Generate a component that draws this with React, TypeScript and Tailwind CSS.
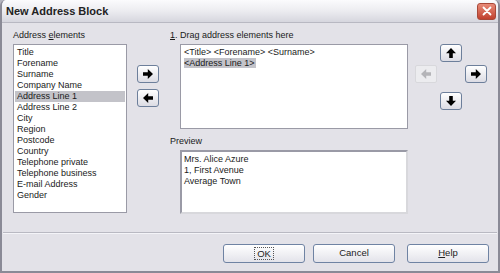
import React from "react";

const font = { fontFamily: '"Liberation Sans", Arial, sans-serif' };

const elements = [
  "Title",
  "Forename",
  "Surname",
  "Company Name",
  "Address Line 1",
  "Address Line 2",
  "City",
  "Region",
  "Postcode",
  "Country",
  "Telephone private",
  "Telephone business",
  "E-mail Address",
  "Gender",
];

type Dir = "up" | "down" | "left" | "right";

function Arrow({ dir, color = "#000" }: { dir: Dir; color?: string }) {
  const rot = { right: 0, down: 90, left: 180, up: 270 }[dir];
  return (
    <svg viewBox="0 0 10 10" className="w-[10px] h-[10px]" style={{ transform: `rotate(${rot}deg)` }}>
      <polygon points="0,3.2 4.8,3.2 4.8,0 10,5 4.8,10 4.8,6.8 0,6.8" fill={color} />
    </svg>
  );
}

function ArrowButton({ dir, disabled }: { dir: Dir; disabled?: boolean }) {
  return (
    <div
      className={
        disabled
          ? "w-[22px] h-[18px] flex items-center justify-center rounded-[2px] border border-[#d8d8dc] bg-[#ececef]"
          : "w-[22px] h-[18px] flex items-center justify-center rounded-[3px] border border-[#6d7f9b] bg-gradient-to-b from-white to-[#dcdce4]"
      }
    >
      <Arrow dir={dir} color={disabled ? "#b4b4b8" : "#000"} />
    </div>
  );
}

function DialogButton({ children, focus }: { children: React.ReactNode; focus?: boolean }) {
  return (
    <div className="w-[82px] h-[19px] flex items-center justify-center rounded-[3px] border border-[#6f83a3] bg-gradient-to-b from-white to-[#e3e3ea] text-[9.5px] text-[#222]">
      {focus ? <span className="border border-dotted border-[#555] px-[2px] leading-[11px]">{children}</span> : children}
    </div>
  );
}

export default function App() {
  return (
    <div className="w-[500px] h-[273px] bg-[#b4b4be] text-[#1a1a1a]" style={font}>
      <div className="w-full h-full flex flex-col border-l-[2px] border-r-[2px] border-b-[2px] border-[#8a8a96] bg-[#e3e2e8] rounded-t-[6px] overflow-hidden">
        <div className="h-[23px] flex items-center justify-between pl-[4px] pr-[2px] bg-gradient-to-b from-[#fbfbfd] via-[#ececf0] to-[#d6d6de] border-b border-[#b8b8c2]">
          <span className="text-[11px] font-bold text-[#222]">New Address Block</span>
          <div className="w-[19px] h-[17px] rounded-[3px] bg-gradient-to-b from-[#e88a78] to-[#c0402e] border border-[#a84838] flex items-center justify-center">
            <svg viewBox="0 0 10 10" className="w-[10px] h-[10px]">
              <path d="M1.5 1.5 L8.5 8.5 M8.5 1.5 L1.5 8.5" stroke="#fff" strokeWidth="1.8" strokeLinecap="round" />
            </svg>
          </div>
        </div>

        <div className="flex pl-[11px] pt-[7px] text-[9px] leading-[11px]">
          <div className="flex flex-col w-[114px]">
            <span className="h-[11px] mb-[3px]">
              Address <span className="underline">e</span>lements
            </span>
            <div className="h-[169px] bg-white border border-[#9a9aa6] pt-[2px] px-[1px]">
              {elements.map((e) => (
                <div
                  key={e}
                  className={e === "Address Line 1" ? "h-[11px] pl-[2px] bg-[#c3c3c9]" : "h-[11px] pl-[2px]"}
                >
                  {e}
                </div>
              ))}
            </div>
          </div>

          <div className="flex flex-col gap-[6px] ml-[10px] mt-[35px]">
            <ArrowButton dir="right" />
            <ArrowButton dir="left" />
          </div>

          <div className="flex flex-col ml-[11px] w-[240px]">
            <span className="h-[11px] mb-[3px]">
              <span className="underline">1</span>. Drag address elements here
            </span>
            <div className="ml-[10px] w-[228px] h-[85px] bg-white border border-[#9a9aa6] pt-[2px] pl-[3px]">
              <div className="h-[11px]">&lt;Title&gt; &lt;Forename&gt; &lt;Surname&gt;</div>
              <div className="h-[11px]">
                <span className="bg-[#c3c3c9] pr-[1px]">&lt;Address Line 1&gt;</span>
              </div>
            </div>
            <span className="h-[11px] mt-[7px] mb-[3px]">Preview</span>
            <div className="ml-[10px] w-[228px] h-[64px] bg-white border-[2px] border-[#9a9aa6] border-r-[#d8d8dc] border-b-[#d8d8dc] pt-[2px] pl-[2px]">
              <div className="h-[11px]">Mrs. Alice Azure</div>
              <div className="h-[11px]">1, First Avenue</div>
              <div className="h-[11px]">Average Town</div>
            </div>
          </div>

          <div className="flex flex-col ml-[5px] mt-[14px] w-[72px]">
            <div className="flex justify-center">
              <ArrowButton dir="up" />
            </div>
            <div className="flex justify-between mt-[3px]">
              <ArrowButton dir="left" disabled />
              <ArrowButton dir="right" />
            </div>
            <div className="flex justify-center mt-[9px]">
              <ArrowButton dir="down" />
            </div>
          </div>
        </div>

        <div className="mt-[18px] mx-[1px] border-t border-[#b9b9c2] border-b border-b-[#f4f4f8]" />

        <div className="flex justify-end gap-[8px] pr-[9px] mt-[10px]">
          <DialogButton focus>OK</DialogButton>
          <DialogButton>Cancel</DialogButton>
          <div className="ml-[4px]">
            <DialogButton>
              <span>
                <span className="underline">H</span>elp
              </span>
            </DialogButton>
          </div>
        </div>
      </div>
    </div>
  );
}
